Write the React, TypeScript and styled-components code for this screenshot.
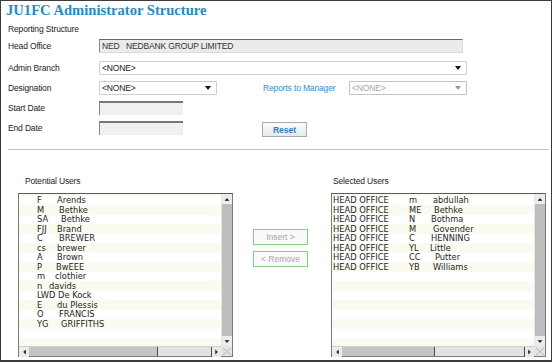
import React from "react";
import styled, { createGlobalStyle } from "styled-components";

const GlobalStyle = createGlobalStyle`
  html, body {
    margin: 0;
    padding: 0;
    background: #ffffff;
  }
  * {
    box-sizing: border-box;
  }
`;

const uiFont = `"Liberation Sans", Arial, sans-serif`;
const listFont = `"DejaVu Sans", Verdana, sans-serif`;

const Frame = styled.div`
  width: 552px;
  height: 362px;
  border: 1px solid #3c3c3c;
  border-bottom-width: 2px;
  display: flex;
  flex-direction: column;
  font-family: ${uiFont};
  font-size: 8.5px;
  letter-spacing: -0.15px;
  color: #222;
  overflow: hidden;
`;

const Title = styled.h1`
  margin: 0;
  height: 18px;
  line-height: 18px;
  padding-left: 5px;
  font-family: "Liberation Serif", "DejaVu Serif", serif;
  font-weight: bold;
  font-size: 14.6px;
  letter-spacing: 0;
  color: #1f8bc8;
`;

const SectionLabel = styled.div`
  margin-top: 5px;
  height: 10px;
  line-height: 10px;
  padding-left: 7px;
`;

const Form = styled.div`
  margin-top: 5px;
  display: grid;
  grid-template-columns: 91px 1fr;
  grid-template-rows: 16px repeat(4, 14px);
  row-gap: 6px;
  padding-left: 7px;
`;

const FieldLabel = styled.div`
  display: flex;
  align-items: center;
  height: 14px;
`;

const FieldRow = styled.div`
  display: flex;
  align-items: flex-start;
  height: 14px;
`;

const ReadOnlyBox = styled.div`
  width: 364px;
  height: 14px;
  display: flex;
  align-items: center;
  padding-left: 2px;
  background: #ebebeb;
  border-top: 1px solid #6a6a6a;
  border-left: 1px solid #8a8a8a;
  border-right: 1px solid #dcdcdc;
  border-bottom: 1px solid #dcdcdc;
  color: #333;
`;

const Code = styled.span`
  width: 24px;
`;

const DateBox = styled.div`
  width: 84px;
  height: 14px;
  background: #f0f0f0;
  border-top: 2px solid #777;
  border-left: 1px solid #888;
`;

const SelectBox = styled.div<{ $width: number; $disabled?: boolean }>`
  width: ${(p) => p.$width}px;
  height: 14px;
  display: flex;
  align-items: center;
  justify-content: space-between;
  padding: 0 5px 0 2px;
  background: #fff;
  border: 1px solid ${(p) => (p.$disabled ? "#c4c4c4" : "#cfcfcf")};
  border-radius: 1px;
  color: ${(p) => (p.$disabled ? "#a8a8a8" : "#222")};
`;

const LinkLabel = styled.div`
  width: 86px;
  margin-left: 46px;
  height: 14px;
  display: flex;
  align-items: center;
  color: #2f8fd0;
`;

const ResetButton = styled.button`
  margin: 1px 0 0 79px;
  width: 45px;
  height: 15px;
  padding: 0;
  border: 1px solid #a9a9a9;
  background: linear-gradient(#fbfbfb, #e9e9e9);
  font-family: ${uiFont};
  font-size: 8.5px;
  font-weight: bold;
  color: #2a7fc0;
`;

const Rule = styled.hr`
  margin: 14px 2px 0 7px;
  height: 1px;
  border: none;
  background: #c2c2c2;
`;

const Lower = styled.div`
  margin-top: 26px;
  display: flex;
  padding-left: 17px;
`;

const ListColumn = styled.div<{ $labelIndent: number }>`
  width: 215px;
  display: flex;
  flex-direction: column;
  & > span {
    height: 10px;
    line-height: 10px;
    padding-left: ${(p) => p.$labelIndent}px;
    margin-bottom: 7px;
  }
`;

const ButtonColumn = styled.div`
  width: 55px;
  margin: 53px 23px 0 20px;
  display: flex;
  flex-direction: column;
  gap: 6px;
`;

const MoveButton = styled.button`
  height: 16px;
  padding: 0;
  border: 1px solid #86cc86;
  background: #fafafa;
  font-family: ${uiFont};
  font-size: 8.5px;
  color: #a8a8a8;
`;

const ListBox = styled.div`
  height: 164px;
  border: 1px solid #7a7a7a;
  border-top-color: #5a5a5a;
  display: grid;
  grid-template-columns: 1fr 11px;
  grid-template-rows: 1fr 10px;
  background: #fff;
`;

const Rows = styled.div`
  padding-top: 2px;
  background: repeating-linear-gradient(
    to bottom,
    #ffffff 0 9.5px,
    #fafaf0 9.5px 19px
  );
  background-position: 0 2px;
  font-family: ${listFont};
  font-size: 8.3px;
  letter-spacing: 0;
  color: #1e1e1e;
  overflow: hidden;
`;

const Row = styled.div<{ $indent: number }>`
  height: 9.5px;
  line-height: 9.5px;
  display: flex;
  padding-left: ${(p) => p.$indent}px;
  white-space: nowrap;
`;

const Cell = styled.span<{ $width: number }>`
  width: ${(p) => p.$width}px;
  flex: none;
`;

const VScroll = styled.div`
  display: flex;
  flex-direction: column;
  background: #bebebe;
  border-left: 1px solid #e6e6e6;
`;

const ArrowCell = styled.div<{ $light?: boolean }>`
  flex: none;
  width: 10px;
  height: 10px;
  display: flex;
  align-items: center;
  justify-content: center;
  background: ${(p) => (p.$light ? "#ececec" : "transparent")};
`;

const VThumb = styled.div`
  flex: 1;
  background: #bdbdbd;
`;

const HScroll = styled.div`
  display: flex;
  background: #e2e2e2;
  border-top: 1px solid #d0d0d0;
`;

const HThumb = styled.div<{ $width: number }>`
  width: ${(p) => p.$width}px;
  background: #c4c4c4;
  border-right: 1px solid #4a4a4a;
`;

const HTrack = styled.div`
  flex: 1;
`;

const RightArrow = styled(ArrowCell)`
  border-left: 1px solid #4a4a4a;
  background: #e8e8e8;
`;

const Corner = styled.div`
  background: #e4e4e4;
  display: flex;
  align-items: center;
  justify-content: center;
`;

type Dir = "up" | "down" | "left" | "right";

const Arrow = ({ dir }: { dir: Dir }) => {
  const pts: Record<Dir, string> = {
    up: "1,4 5,0 9,4",
    down: "1,0 5,4 9,0",
    left: "4,1 0,5 4,9",
    right: "0,1 4,5 0,9",
  };
  const vertical = dir === "up" || dir === "down";
  return (
    <svg
      width={vertical ? 6 : 3}
      height={vertical ? 3 : 6}
      viewBox={vertical ? "0 0 10 4" : "0 0 4 10"}
    >
      <polygon points={pts[dir]} fill="#111" />
    </svg>
  );
};

const Grip = () => (
  <svg width="10" height="9" viewBox="0 0 10 9">
    <path d="M1 1 L9 8 M9 1 L1 8" stroke="#b8b8b8" strokeWidth="1" />
  </svg>
);

const SelectArrow = ({ color }: { color: string }) => (
  <svg width="6" height="4" viewBox="0 0 6 4">
    <polygon points="0,0 6,0 3,4" fill={color} />
  </svg>
);

type Item = { cols: string[]; widths: number[] };

const potential: Item[] = [
  ["F", "Arends", 20],
  ["M", "Bethke", 22],
  ["SA", "Bethke", 24],
  ["FJJ", "Brand", 20],
  ["C", "BREWER", 22],
  ["cs", "brewer", 20],
  ["A", "Brown", 20],
  ["P", "BwEEE", 19],
  ["m", "clothier", 18],
  ["n", "davids", 12],
  ["LWD", "De Kock", 21],
  ["E", "du Plessis", 20],
  ["O", "FRANCIS", 22],
  ["YG", "GRIFFITHS", 24],
].map(([i, n, w]) => ({
  cols: [i as string, n as string],
  widths: [w as number, 120],
}));

const selected: Item[] = [
  ["m", "abdullah", 24],
  ["ME", "Bethke", 25],
  ["N", "Bothma", 22],
  ["M", "Govender", 24],
  ["C", "HENNING", 22],
  ["YL", "Little", 21],
  ["CC", "Putter", 26],
  ["YB", "Williams", 24],
].map(([i, n, w]) => ({
  cols: ["HEAD OFFICE", i as string, n as string],
  widths: [76, w as number, 80],
}));

const UserList = ({
  items,
  indent,
  thumb,
}: {
  items: Item[];
  indent: number;
  thumb: number;
}) => (
  <ListBox>
    <Rows>
      {items.map((item, r) => (
        <Row key={r} $indent={indent}>
          {item.cols.map((c, k) => (
            <Cell key={k} $width={item.widths[k]}>
              {c}
            </Cell>
          ))}
        </Row>
      ))}
    </Rows>
    <VScroll>
      <ArrowCell $light>
        <Arrow dir="up" />
      </ArrowCell>
      <VThumb />
      <ArrowCell $light>
        <Arrow dir="down" />
      </ArrowCell>
    </VScroll>
    <HScroll>
      <ArrowCell $light>
        <Arrow dir="left" />
      </ArrowCell>
      <HThumb $width={thumb} />
      <HTrack />
      <RightArrow>
        <Arrow dir="right" />
      </RightArrow>
    </HScroll>
    <Corner>
      <Grip />
    </Corner>
  </ListBox>
);

export default function App() {
  return (
    <>
      <GlobalStyle />
      <Frame>
        <Title>JU1FC Administrator Structure</Title>
        <SectionLabel>Reporting Structure</SectionLabel>
        <Form>
          <FieldLabel>Head Office</FieldLabel>
          <FieldRow>
            <ReadOnlyBox>
              <Code>NED</Code>
              <span>NEDBANK GROUP LIMITED</span>
            </ReadOnlyBox>
          </FieldRow>
          <FieldLabel>Admin Branch</FieldLabel>
          <FieldRow>
            <SelectBox $width={368}>
              <span>&lt;NONE&gt;</span>
              <SelectArrow color="#111" />
            </SelectBox>
          </FieldRow>
          <FieldLabel>Designation</FieldLabel>
          <FieldRow>
            <SelectBox $width={118}>
              <span>&lt;NONE&gt;</span>
              <SelectArrow color="#111" />
            </SelectBox>
            <LinkLabel>Reports to Manager</LinkLabel>
            <SelectBox $width={118} $disabled>
              <span>&lt;NONE&gt;</span>
              <SelectArrow color="#9a9a9a" />
            </SelectBox>
          </FieldRow>
          <FieldLabel>Start Date</FieldLabel>
          <FieldRow>
            <DateBox />
          </FieldRow>
          <FieldLabel>End Date</FieldLabel>
          <FieldRow>
            <DateBox />
            <ResetButton>Reset</ResetButton>
          </FieldRow>
        </Form>
        <Rule />
        <Lower>
          <ListColumn $labelIndent={7}>
            <span>Potential Users</span>
            <UserList items={potential} indent={18} thumb={129} />
          </ListColumn>
          <ButtonColumn>
            <MoveButton>Insert &gt;</MoveButton>
            <MoveButton>&lt; Remove</MoveButton>
          </ButtonColumn>
          <ListColumn $labelIndent={2}>
            <span>Selected Users</span>
            <UserList items={selected} indent={1} thumb={93} />
          </ListColumn>
        </Lower>
      </Frame>
    </>
  );
}
